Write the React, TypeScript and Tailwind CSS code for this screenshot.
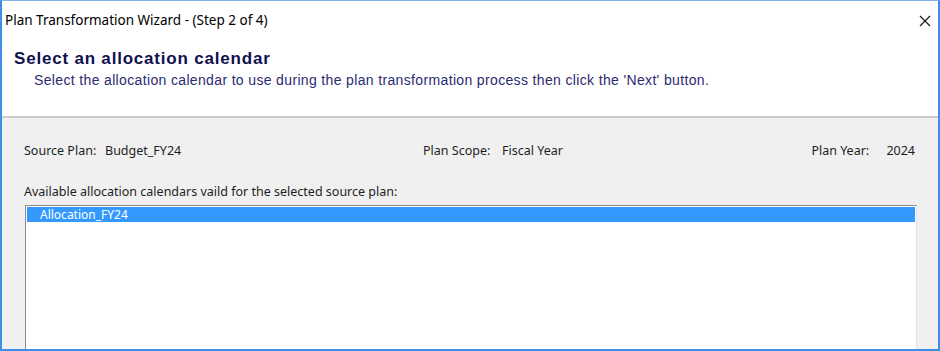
export default function App() {
  return (
    <div className="flex h-[351px] w-[940px] flex-col overflow-hidden border-x-2 border-b-2 border-t border-x-[#3d8ee6] border-b-[#3d8ee6] border-t-[#7fb5ee] bg-white">
      <TitleBar />
      <Header />
      <Body />
    </div>
  );
}

function TitleBar() {
  return (
    <div className="flex h-[37px] shrink-0 items-center justify-between pl-[3px] pr-[7px] font-['Noto_Sans',sans-serif] text-[13.5px] text-black">
      <span className="pt-px">Plan Transformation Wizard - (Step 2 of 4)</span>
      <svg width="12" height="12" viewBox="0 0 12 12" className="mt-[3px]">
        <path d="M1 1 L11 11 M11 1 L1 11" stroke="#1a1a1a" strokeWidth="1.2" fill="none" />
      </svg>
    </div>
  );
}

function Header() {
  return (
    <div className="h-[80px] shrink-0 border-b-2 border-[#cdcdcd] pl-[12px] pt-[11px] font-['Liberation_Sans',Arial,sans-serif]">
      <div className="text-[17px] font-bold leading-[20px] tracking-[0.8px] text-[#10104f]">
        Select an allocation calendar
      </div>
      <div className="mt-[3px] pl-[20px] text-[14px] leading-[17px] tracking-[0.35px] text-[#2b2b72]">
        Select the allocation calendar to use during the plan transformation process then click the 'Next' button.
      </div>
    </div>
  );
}

function Body() {
  return (
    <div className="flex min-h-0 flex-1 flex-col bg-[#f0f0f0] pl-[22px] pr-[21px] pt-[25px] font-['Noto_Sans',sans-serif] text-[12.5px] leading-[16px] text-[#1e1e1e]">
      <div className="grid grid-cols-[399px_1fr_auto] pr-[2px]">
        <div className="flex">
          <span className="w-[81px]">Source Plan:</span>
          <span>Budget_FY24</span>
        </div>
        <div className="flex">
          <span className="w-[79px]">Plan Scope:</span>
          <span>Fiscal Year</span>
        </div>
        <div className="flex">
          <span className="w-[75px]">Plan Year:</span>
          <span>2024</span>
        </div>
      </div>
      <div className="mt-[25px]">Available allocation calendars vaild for the selected source plan:</div>
      <div className="ml-px mt-[5px] flex-1 border border-b-0 border-l-[#8c8c8c] border-r-[#e3e3e3] border-t-[#8c8c8c] bg-white p-px">
        <div className="h-[15px] bg-[#3399ff] pl-[13px] text-[12px] leading-[15px] text-white">Allocation_FY24</div>
      </div>
    </div>
  );
}
